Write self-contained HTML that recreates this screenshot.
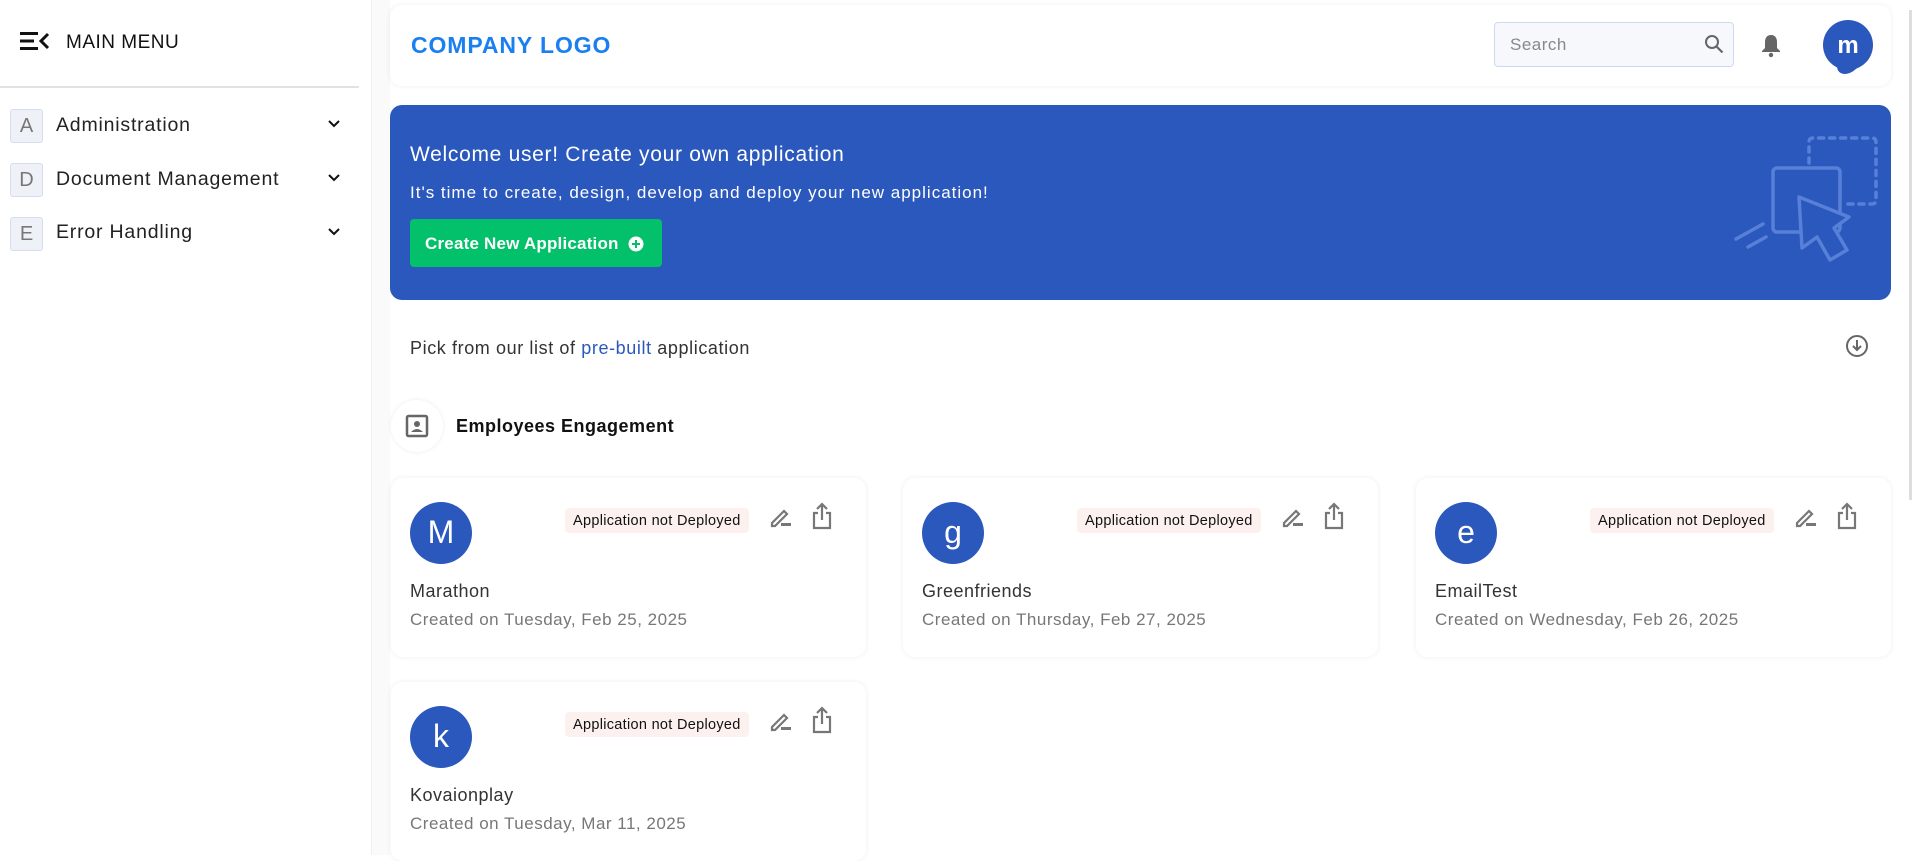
<!DOCTYPE html>
<html><head><meta charset="utf-8"><style>
*{box-sizing:border-box;margin:0;padding:0}
body{width:1912px;height:855px;overflow:hidden;background:#fff;font-family:"Liberation Sans",sans-serif;position:relative;color:#222;letter-spacing:0.5px}
.a{position:absolute}
.side{left:0;top:0;width:372px;height:855px;background:#fff;border-right:1px solid #f0f0f0}
.strip{left:372px;top:0;width:18px;height:855px;background:#fafafa}
.mi{left:10px;width:33px;height:34px;border:1px solid #d6ddf0;background:#eef1f8;border-radius:3px;color:#777;font-size:20px;text-align:center;line-height:33px;letter-spacing:0}
.ml{left:56px;font-size:19.5px;color:#222;letter-spacing:0.8px}
.chev{left:327px}
.card{background:#fff;border-radius:12px;box-shadow:0 0 6px rgba(0,0,0,.07);width:475px;height:179px}
.av{left:19px;top:24px;width:62px;height:62px;border-radius:50%;background:#2b58bd;color:#fff;font-size:32px;text-align:center;line-height:60px;letter-spacing:0}
.badge{left:174px;top:30px;height:25px;padding:0 8px;background:#fdf1f0;border-radius:4px;font-size:14.5px;line-height:26px;color:#111;letter-spacing:0.3px}
.nm{left:19px;top:103px;font-size:18px;color:#333}
.dt{left:19px;top:132px;font-size:17px;color:#777}
</style></head><body>
<div class="a side"></div>
<div class="a strip"></div>
<svg class="a" style="left:20px;top:31px" width="30" height="20" viewBox="0 0 30 20"><rect x="0" y="1" width="18" height="3" fill="#111"/><rect x="0" y="8.5" width="14" height="3" fill="#111"/><rect x="0" y="16" width="18" height="3" fill="#111"/><path d="M28 3 L21 10 L28 17" stroke="#111" stroke-width="3" fill="none"/></svg>
<div class="a" style="left:66px;top:32px;font-size:19px;color:#111">MAIN MENU</div>
<div class="a" style="left:0;top:86px;width:359px;height:2px;background:#e2e2e2"></div>
<div class="a mi" style="top:109px">A</div><div class="a ml" style="top:114px">Administration</div>
<div class="a mi" style="top:163px">D</div><div class="a ml" style="top:168px">Document Management</div>
<div class="a mi" style="top:217px">E</div><div class="a ml" style="top:221px">Error Handling</div>
<svg class="a chev" style="top:119px" width="14" height="10"><path d="M2 2l5 5 5-5" stroke="#111" stroke-width="2" fill="none"/></svg>
<svg class="a chev" style="top:173px" width="14" height="10"><path d="M2 2l5 5 5-5" stroke="#111" stroke-width="2" fill="none"/></svg>
<svg class="a chev" style="top:227px" width="14" height="10"><path d="M2 2l5 5 5-5" stroke="#111" stroke-width="2" fill="none"/></svg>

<div class="a" style="left:390px;top:5px;width:1501px;height:81px;background:#fff;border-radius:12px;box-shadow:0 0 6px rgba(0,0,0,.07)"></div>
<div class="a" style="left:411px;top:32px;font-size:23px;font-weight:bold;color:#1a7ff0;letter-spacing:0.9px">COMPANY LOGO</div>
<div class="a" style="left:1494px;top:22px;width:240px;height:45px;background:#f6f8fc;border:1px solid #cdd8f3;border-radius:4px"></div>
<div class="a" style="left:1510px;top:35px;font-size:17px;color:#888">Search</div>
<svg class="a" style="left:1704px;top:34px" width="20" height="20"><circle cx="8" cy="8" r="6" stroke="#666" stroke-width="2" fill="none"/><path d="M12.5 12.5l6 6" stroke="#666" stroke-width="2.2"/></svg>
<svg class="a" style="left:1760px;top:33px" width="22" height="25" viewBox="0 0 22 25"><path d="M11 2c-4 0-6 3-6 7v6l-3 3v1h18v-1l-3-3V9c0-4-2-7-6-7z" fill="#666"/><circle cx="11" cy="22" r="2.2" fill="#666"/></svg>
<div class="a" style="left:1836px;top:62px;width:22px;height:12px;background:#2b58bd;border-radius:0 0 12px 12px;transform:skewX(-20deg)"></div>
<div class="a" style="left:1823px;top:20px;width:50px;height:50px;border-radius:50%;background:#2b58bd;color:#fff;font-weight:bold;font-size:24px;text-align:center;line-height:52px;letter-spacing:0">m</div>

<div class="a" style="left:390px;top:105px;width:1501px;height:195px;background:#2b58bd;border-radius:12px"></div>
<div class="a" style="left:410px;top:143px;font-size:21px;color:#fff;letter-spacing:0.7px">Welcome user! Create your own application</div>
<div class="a" style="left:410px;top:183px;font-size:17px;color:#fff;letter-spacing:1px">It's time to create, design, develop and deploy your new application!</div>
<div class="a" style="left:410px;top:219px;width:252px;height:48px;background:#03c06a;border-radius:4px;color:#fff;font-size:17px;font-weight:bold;line-height:50px;padding-left:15px;letter-spacing:0.2px">Create New Application</div>
<svg class="a" style="left:628px;top:236px" width="16" height="16"><circle cx="8" cy="8" r="7.5" fill="#fff"/><path d="M8 4v8M4 8h8" stroke="#03c06a" stroke-width="2"/></svg>
<svg class="a" style="left:1733px;top:132px" width="145" height="130" viewBox="0 0 145 130" fill="none" stroke="#5880d8" stroke-width="3.5" stroke-linecap="round" stroke-linejoin="round">
<path d="M76 31V10q0-4 4-4h59q4 0 4 4v58q0 4-4 4h-25" stroke-dasharray="5 6"/>
<rect x="40" y="36" width="67" height="64" rx="4"/>
<path d="M66 65l50 20-15 11 13 22-17 10-13-23-15 11z" fill="#2b58bd"/>
<path d="M3 107l27-15M15 115l18-10"/></svg>

<div class="a" style="left:410px;top:338px;font-size:18px;color:#333;letter-spacing:0.6px">Pick from our list of <span style="color:#2b58bd">pre-built</span> application</div>
<svg class="a" style="left:1845px;top:334px" width="24" height="24"><circle cx="12" cy="12" r="10" stroke="#666" stroke-width="2" fill="none"/><path d="M12 6v10M8 12l4 4 4-4" stroke="#666" stroke-width="2" fill="none"/></svg>
<div class="a" style="left:391px;top:400px;width:52px;height:52px;border-radius:50%;background:#fff;box-shadow:0 0 5px rgba(0,0,0,.08)"></div>
<svg class="a" style="left:405px;top:414px" width="24" height="24"><rect x="2" y="2" width="20" height="20" rx="1.5" stroke="#666" stroke-width="2.5" fill="none"/><circle cx="12" cy="10" r="3" fill="#666"/><path d="M6 18q6-6 12 0z" fill="#666"/></svg>
<div class="a" style="left:456px;top:416px;font-size:18px;font-weight:bold;color:#111;letter-spacing:0.5px">Employees Engagement</div>

<div class="a card" style="left:391px;top:478px"><div class="a av">M</div><div class="a badge">Application not Deployed</div>
<svg class="a" style="left:378px;top:28px" width="24" height="22"><path d="M3 17L15 5l3 3L6 20H3z" stroke="#777" stroke-width="2.2" fill="none"/><rect x="12" y="17" width="10" height="3" fill="#777"/></svg>
<svg class="a" style="left:420px;top:24px" width="22" height="28"><path d="M11 2v16M6 7l5-5 5 5" stroke="#777" stroke-width="2.2" fill="none"/><path d="M7 11H3v15h16V11h-4" stroke="#777" stroke-width="2.2" fill="none"/></svg>
<div class="a nm">Marathon</div><div class="a dt">Created on Tuesday, Feb 25, 2025</div></div>

<div class="a card" style="left:903px;top:478px"><div class="a av">g</div><div class="a badge">Application not Deployed</div>
<svg class="a" style="left:378px;top:28px" width="24" height="22"><path d="M3 17L15 5l3 3L6 20H3z" stroke="#777" stroke-width="2.2" fill="none"/><rect x="12" y="17" width="10" height="3" fill="#777"/></svg>
<svg class="a" style="left:420px;top:24px" width="22" height="28"><path d="M11 2v16M6 7l5-5 5 5" stroke="#777" stroke-width="2.2" fill="none"/><path d="M7 11H3v15h16V11h-4" stroke="#777" stroke-width="2.2" fill="none"/></svg>
<div class="a nm">Greenfriends</div><div class="a dt">Created on Thursday, Feb 27, 2025</div></div>

<div class="a card" style="left:1416px;top:478px"><div class="a av">e</div><div class="a badge">Application not Deployed</div>
<svg class="a" style="left:378px;top:28px" width="24" height="22"><path d="M3 17L15 5l3 3L6 20H3z" stroke="#777" stroke-width="2.2" fill="none"/><rect x="12" y="17" width="10" height="3" fill="#777"/></svg>
<svg class="a" style="left:420px;top:24px" width="22" height="28"><path d="M11 2v16M6 7l5-5 5 5" stroke="#777" stroke-width="2.2" fill="none"/><path d="M7 11H3v15h16V11h-4" stroke="#777" stroke-width="2.2" fill="none"/></svg>
<div class="a nm">EmailTest</div><div class="a dt">Created on Wednesday, Feb 26, 2025</div></div>

<div class="a card" style="left:391px;top:682px"><div class="a av">k</div><div class="a badge">Application not Deployed</div>
<svg class="a" style="left:378px;top:28px" width="24" height="22"><path d="M3 17L15 5l3 3L6 20H3z" stroke="#777" stroke-width="2.2" fill="none"/><rect x="12" y="17" width="10" height="3" fill="#777"/></svg>
<svg class="a" style="left:420px;top:24px" width="22" height="28"><path d="M11 2v16M6 7l5-5 5 5" stroke="#777" stroke-width="2.2" fill="none"/><path d="M7 11H3v15h16V11h-4" stroke="#777" stroke-width="2.2" fill="none"/></svg>
<div class="a nm">Kovaionplay</div><div class="a dt">Created on Tuesday, Mar 11, 2025</div></div>

<div class="a" style="left:1909px;top:10px;width:3px;height:490px;background:#ddd"></div>
</body></html>
